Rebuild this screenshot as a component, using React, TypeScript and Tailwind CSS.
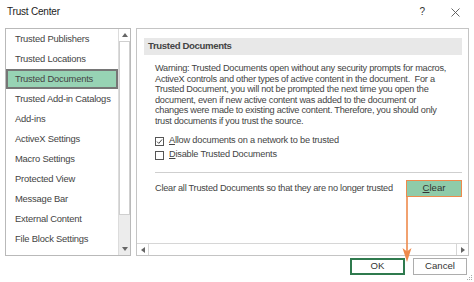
import React from "react";

const items = [
  "Trusted Publishers",
  "Trusted Locations",
  "Trusted Documents",
  "Trusted Add-in Catalogs",
  "Add-ins",
  "ActiveX Settings",
  "Macro Settings",
  "Protected View",
  "Message Bar",
  "External Content",
  "File Block Settings",
];

const lines = [
  "Warning: Trusted Documents open without any security prompts for macros,",
  "ActiveX controls and other types of active content in the document.  For a",
  "Trusted Document, you will not be prompted the next time you open the",
  "document, even if new active content was added to the document or",
  "changes were made to existing active content. Therefore, you should only",
  "trust documents if you trust the source.",
];

export default function App() {
  return (
    <div
      className="relative w-[474px] h-[282px] bg-white overflow-hidden flex flex-col text-[#444]"
      style={{ fontFamily: '"Liberation Sans", Arial, sans-serif' }}
    >
      {/* title bar */}
      <div className="h-[28px] flex items-start pt-[4px] pl-[7px] pr-[14px]">
        <div className="text-[10px] text-[#222] leading-[16px] tracking-[-0.2px]">Trust Center</div>
        <div className="ml-auto flex items-center gap-[26px] leading-[16px]">
          <span className="text-[10px] text-[#333]">?</span>
          <svg width="9" height="9" viewBox="0 0 9 9">
            <path d="M0.5 0.5 L8.5 8.5 M8.5 0.5 L0.5 8.5" stroke="#555" strokeWidth="0.9" />
          </svg>
        </div>
      </div>

      {/* body */}
      <div className="flex px-[5px] gap-[5px] h-[228px]">
        {/* left list */}
        <div className="w-[126px] h-full border border-[#b9b9b9] flex">
          <div className="flex-1 flex flex-col">
            {items.map((it) => {
              const sel = it === "Trusted Documents";
              return (
                <div
                  key={it}
                  className={
                    "h-[20px] flex items-center whitespace-nowrap text-[9.4px] tracking-[-0.2px] " +
                    (sel
                      ? "bg-[#97d3b4] border-2 border-[#767676] pl-[7px]"
                      : "pl-[9px]")
                  }
                >
                  {it}
                </div>
              );
            })}
          </div>
          <div className="w-[12px] h-full border-l border-[#dcdcdc] flex flex-col">
            <div className="h-[12px] flex items-center justify-center">
              <svg width="6" height="4" viewBox="0 0 6 4">
                <path d="M0 4 L3 0 L6 4 Z" fill="#666" />
              </svg>
            </div>
            <div className="h-[174px] border border-[#cfcfcf] bg-white" />
            <div className="flex-1 bg-[#ececec]" />
            <div className="h-[12px] flex items-center justify-center bg-[#ececec]">
              <svg width="6" height="4" viewBox="0 0 6 4">
                <path d="M0 0 L3 4 L6 0 Z" fill="#666" />
              </svg>
            </div>
          </div>
        </div>

        {/* right panel */}
        <div className="w-[333px] h-full border border-[#c4c4c4] flex flex-col">
          <div className="flex-1 flex flex-col pl-[7px] pr-[6px] pt-[9px]">
            <div className="h-[17px] bg-[#e8e8e8] flex items-center pl-[4px] text-[9.6px] font-bold text-[#444] tracking-[-0.35px]">
              Trusted Documents
            </div>
            <div className="pl-[11px] pt-[8px] text-[9.2px] leading-[10.6px] tracking-[-0.25px]">
              {lines.map((l, i) => (
                <div key={i} className="whitespace-pre">
                  {l}
                </div>
              ))}
            </div>
            <div className="pl-[11px] pt-[10px] flex flex-col gap-[5px] text-[9.2px] tracking-[-0.2px]">
              <div className="flex items-center gap-[5px] h-[9px]">
                <div className="w-[9px] h-[9px] border border-[#555] flex items-center justify-center">
                  <svg width="7" height="7" viewBox="0 0 7 7">
                    <path d="M1 3.6 L2.8 5.4 L6 1.5" fill="none" stroke="#333" strokeWidth="0.9" />
                  </svg>
                </div>
                <span>
                  <span className="underline">A</span>llow documents on a network to be trusted
                </span>
              </div>
              <div className="flex items-center gap-[5px] h-[9px]">
                <div className="w-[9px] h-[9px] border border-[#555]" />
                <span>
                  <span className="underline">D</span>isable Trusted Documents
                </span>
              </div>
            </div>
            <div className="ml-[11px] mt-[12px] h-px bg-[#cfcfcf]" />
            <div className="pl-[11px] pt-[7px] flex items-start text-[9.2px] tracking-[-0.25px]">
              <span className="mt-[2px] whitespace-nowrap">Clear all Trusted Documents so that they are no longer trusted</span>
              <div className="ml-auto w-[56px] h-[17px] bg-[#8fcba9] border border-[#ee8a4c] flex items-center justify-center text-[9.6px] text-[#333] tracking-normal">
                <span>
                  <span className="underline">C</span>lear
                </span>
              </div>
            </div>
          </div>
          <div className="h-[12px] border-t border-[#d6d6d6] flex">
            <div className="w-[12px] flex items-center justify-center border-r border-[#d6d6d6]">
              <svg width="4" height="6" viewBox="0 0 4 6">
                <path d="M4 0 L0 3 L4 6 Z" fill="#666" />
              </svg>
            </div>
            <div className="flex-1" />
            <div className="w-[12px] flex items-center justify-center border-l border-[#d6d6d6]">
              <svg width="4" height="6" viewBox="0 0 4 6">
                <path d="M0 0 L4 3 L0 6 Z" fill="#666" />
              </svg>
            </div>
          </div>
        </div>
      </div>

      {/* bottom buttons */}
      <div className="flex justify-end gap-[8px] pr-[7px] pt-[2px]">
        <div className="w-[55px] h-[17px] border-2 border-[#2f7a4e] flex items-center justify-center text-[9.6px] text-[#333]">
          OK
        </div>
        <div className="w-[54px] h-[17px] border border-[#adadad] flex items-center justify-center text-[9.6px] text-[#333]">
          Cancel
        </div>
      </div>

      {/* orange arrow overlay */}
      <svg className="absolute left-0 top-0 pointer-events-none" width="474" height="282">
        <line x1="407" y1="196" x2="407" y2="254" stroke="#ee8a4c" strokeWidth="1.6" />
        <path d="M402.5 248 L407 262 L411.5 248 L407 251.5 Z" fill="#ee8a4c" />
      </svg>

      {/* resize grip */}
      <svg className="absolute right-[1px] bottom-[1px]" width="6" height="6" viewBox="0 0 6 6">
        <rect x="4" y="0" width="1" height="1" fill="#aaa" />
        <rect x="2" y="2" width="1" height="1" fill="#aaa" />
        <rect x="4" y="2" width="1" height="1" fill="#aaa" />
        <rect x="0" y="4" width="1" height="1" fill="#aaa" />
        <rect x="2" y="4" width="1" height="1" fill="#aaa" />
        <rect x="4" y="4" width="1" height="1" fill="#aaa" />
      </svg>
    </div>
  );
}
